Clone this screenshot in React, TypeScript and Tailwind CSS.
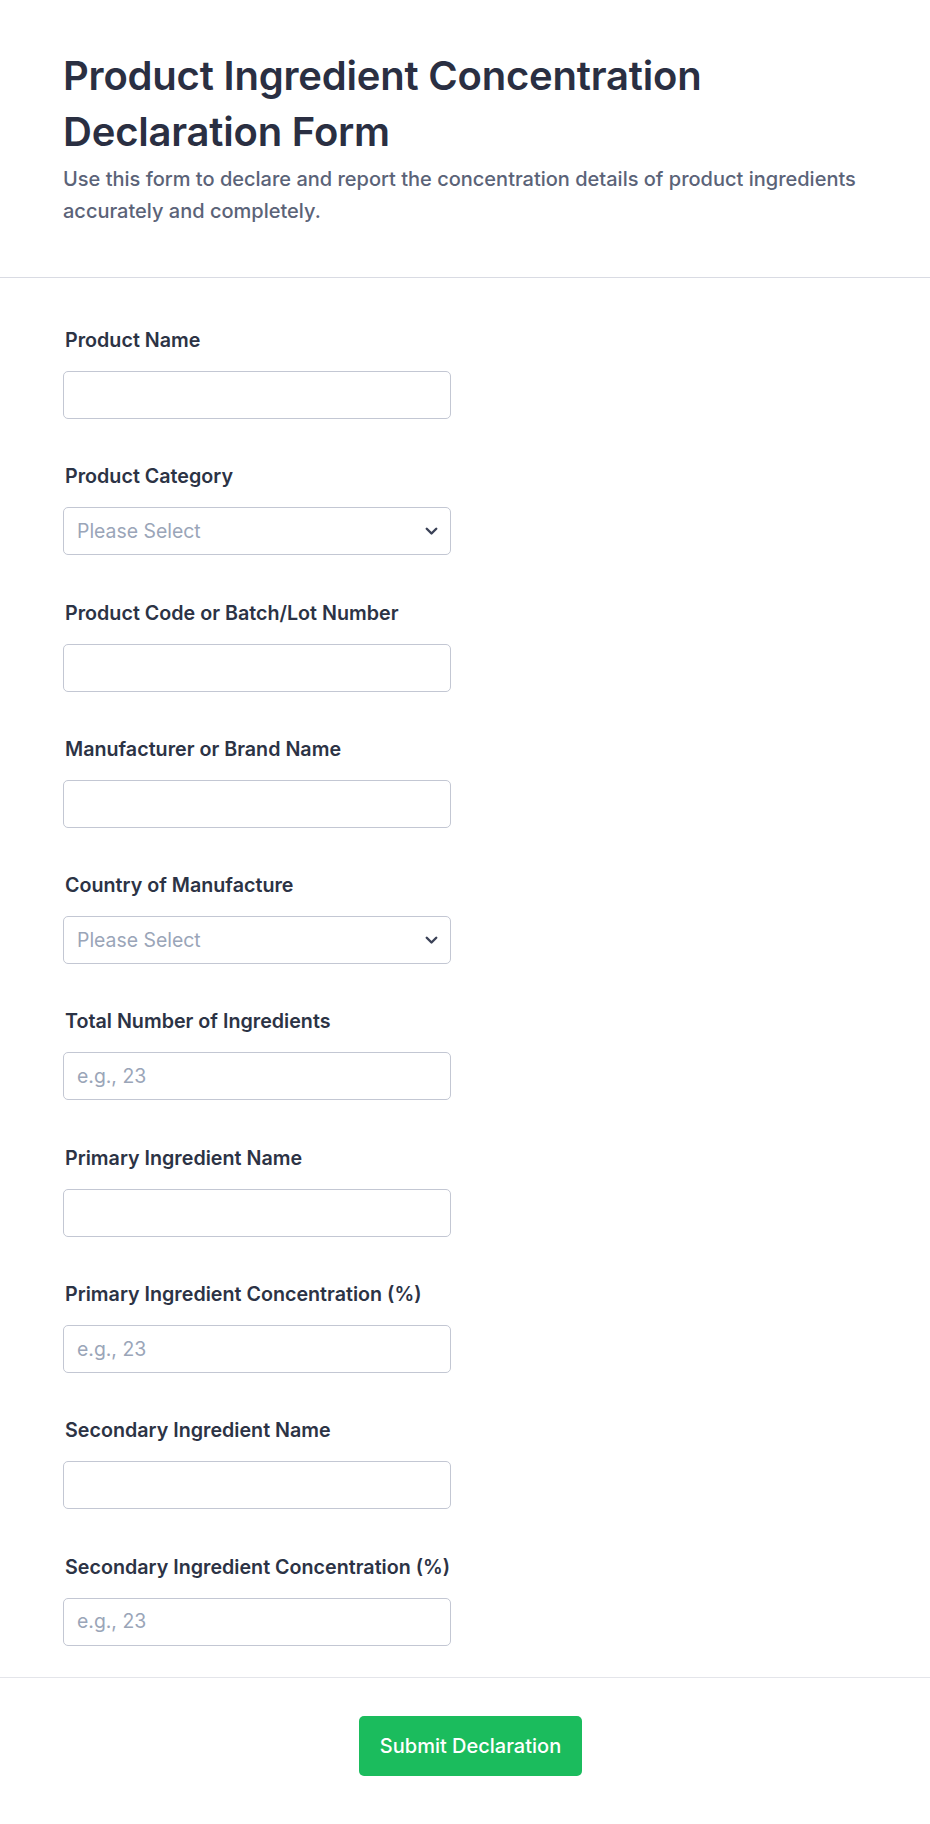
import React from "react";

type Field = { label: string; kind: "text" | "select" | "number" };

const fields: Field[] = [
  { label: "Product Name", kind: "text" },
  { label: "Product Category", kind: "select" },
  { label: "Product Code or Batch/Lot Number", kind: "text" },
  { label: "Manufacturer or Brand Name", kind: "text" },
  { label: "Country of Manufacture", kind: "select" },
  { label: "Total Number of Ingredients", kind: "number" },
  { label: "Primary Ingredient Name", kind: "text" },
  { label: "Primary Ingredient Concentration (%)", kind: "number" },
  { label: "Secondary Ingredient Name", kind: "text" },
  { label: "Secondary Ingredient Concentration (%)", kind: "number" },
];

function Chevron() {
  return (
    <svg width="13" height="9" viewBox="0 0 13 9" fill="none">
      <path d="M1.75 1.75L6.5 6.5L11.25 1.75" stroke="#3b4257" strokeWidth="2.4" strokeLinecap="round" strokeLinejoin="round" />
    </svg>
  );
}

export default function App() {
  return (
    <div className="min-h-[1824px] w-[930px] bg-white font-['Inter',sans-serif]">
      <header className="px-[63px] pt-[48px] pb-[50px] border-b border-[#d9dbe3]">
        <h1 className="text-[40px] leading-[56px] font-semibold text-[#2a2f42] tracking-[-0.2px]">
          Product Ingredient Concentration Declaration Form
        </h1>
        <p className="mt-[3px] text-[20px] leading-[32px] font-medium text-[#5b6378]">
          Use this form to declare and report the concentration details of product ingredients accurately and completely.
        </p>
      </header>
      <main className="px-[63px] pt-[48px] pb-[31px] border-b border-[#e4e5ea] flex flex-col gap-[43.3px]">
        {fields.map((f) => (
          <div key={f.label} className="flex flex-col gap-[17px]">
            <label className="pl-[2px] text-[19.7px] leading-[28px] font-semibold text-[#2c3345]">{f.label}</label>
            {f.kind === "select" ? (
              <div className="w-[388px] h-[48px] rounded-[5px] border border-[#c3c7d3] flex items-center justify-between pl-[13px] pr-[12px]">
                <span className="text-[19.4px] text-[#9aa5b8]">Please Select</span>
                <Chevron />
              </div>
            ) : (
              <div className="w-[388px] h-[48px] rounded-[5px] border border-[#c3c7d3] flex items-center pl-[13px]">
                {f.kind === "number" && <span className="text-[19.4px] text-[#9aa5b8]">e.g., 23</span>}
              </div>
            )}
          </div>
        ))}
      </main>
      <div className="flex justify-center pt-[38px] pl-[11px]">
        <button className="w-[223px] h-[60px] rounded-[5px] bg-[#1bbc5d] text-white text-[20px] font-medium">
          Submit Declaration
        </button>
      </div>
    </div>
  );
}
